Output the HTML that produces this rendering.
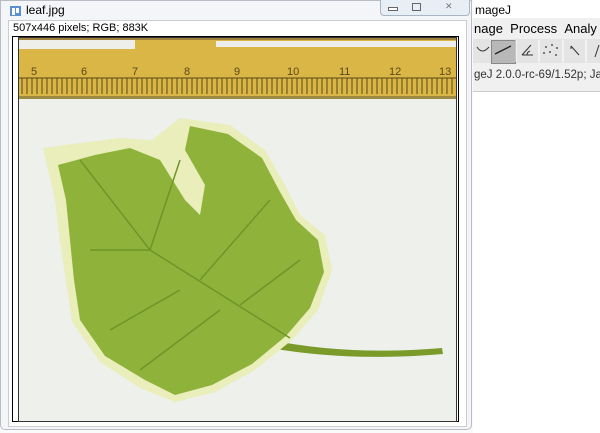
<!DOCTYPE html>
<html><head><style>
body{margin:0;width:600px;height:433px;overflow:hidden;background:#fafafa;font-family:"Liberation Sans",sans-serif;position:relative}
.a{position:absolute}
</style></head><body>
<div class="a" style="left:473px;top:0;width:127px;height:20px;background:#fff"></div>
<div class="a" style="left:475px;top:3px;font-size:12px;color:#000">mageJ</div>
<div class="a" style="left:473px;top:18px;width:127px;height:90px;background:#f0f0f0"></div>
<div class="a" style="left:474px;top:21px;font-size:13px;color:#000;white-space:nowrap">nage&nbsp;&nbsp;Process&nbsp;&nbsp;Analy</div>
<div class="a" style="left:473px;top:39px;width:127px;height:24px;background:#e4e4e4"></div>
<div class="a" style="left:491px;top:40px;width:23px;height:22px;background:#b8b8b8;border:1px solid #888"></div>
<svg class="a" style="left:473px;top:39px" width="127" height="24">
<path d="M4 8 q5 8 12 0" stroke="#333" fill="none"/>
<line x1="22" y1="15" x2="38" y2="7" stroke="#222" stroke-width="1.3"/>
<path d="M49 16 L60 16 M49 16 L58 6 M54 16 q0-3 3-4" stroke="#333" fill="none"/>
<g fill="#555"><circle cx="73" cy="8" r="1"/><circle cx="79" cy="6" r="1"/><circle cx="84" cy="9" r="1"/><circle cx="71" cy="14" r="1"/><circle cx="77" cy="13" r="1"/><circle cx="83" cy="16" r="1"/></g>
<path d="M98 7 L106 16 M98 7 L98 10" stroke="#333" fill="none"/>
<path d="M122 18 L126 6" stroke="#333" fill="none"/>
<line x1="43" y1="1" x2="43" y2="23" stroke="#fff"/><line x1="66" y1="1" x2="66" y2="23" stroke="#fff"/><line x1="90" y1="1" x2="90" y2="23" stroke="#fff"/><line x1="113" y1="1" x2="113" y2="23" stroke="#fff"/>
</svg>
<div class="a" style="left:474px;top:69px;font-size:11.5px;color:#333;white-space:nowrap">geJ 2.0.0-rc-69/1.52p; Jav</div>
<div class="a" style="left:473px;top:91px;width:127px;height:1px;background:#ccc"></div>
<div class="a" style="left:473px;top:92px;width:127px;height:341px;background:#fff"></div>
<div class="a" style="left:0;top:0;width:472px;height:430px;background:#f3f5f8;border:1px solid #b8bcc4;border-radius:0 0 5px 5px;box-sizing:border-box"></div>
<svg class="a" style="left:10px;top:5px" width="12" height="12"><rect x="0" y="1" width="11" height="10" fill="#5b8fd0"/><rect x="2" y="3" width="3" height="7" fill="#fff"/><rect x="6" y="3" width="3" height="5" fill="#fff"/></svg>
<div class="a" style="left:26px;top:3px;font-size:12px;color:#000">leaf.jpg</div>
<div class="a" style="left:380px;top:0;width:88px;height:15px;background:#e8eef6;border:1px solid #a8b4c4;border-top:none;border-radius:0 0 4px 4px"></div>
<div class="a" style="left:388px;top:7px;width:8px;height:2px;border:1px solid #666;background:#fff"></div>
<div class="a" style="left:412px;top:3px;width:7px;height:6px;border:1px solid #666"></div>
<div class="a" style="left:445px;top:1px;font-size:9px;color:#777">✕</div>
<div class="a" style="left:8px;top:20px;width:457px;height:405px;background:#fff;border:1px solid #ccc"></div>
<div class="a" style="left:13px;top:22px;font-size:11px;color:#000">507x446 pixels; RGB; 883K</div>
<div class="a" style="left:12px;top:36px;width:447px;height:386px;border:1px solid #000;box-sizing:border-box"></div>
<div class="a" style="left:18px;top:37px;width:439px;height:385px;background:#eef0ec;border:1px solid #333;box-sizing:border-box"></div>
<svg class="a" style="left:19px;top:38px" width="437" height="383">
<rect x="0" y="0" width="437" height="60" fill="#d9b646"/>
<rect x="0" y="0" width="437" height="2" fill="#a0803a"/>
<rect x="0" y="2" width="116" height="9" fill="#eeeeea"/>
<rect x="197" y="3" width="240" height="6" fill="#eeeeea"/>
<rect x="0" y="58" width="437" height="3" fill="#9c8a40"/>
<path stroke="#5a4818" d="M0 40 H437"/>
<g fill="#5a4818" font-size="11" font-family="Liberation Sans">
<text x="12" y="37">5</text><text x="62" y="37">6</text><text x="113" y="37">7</text><text x="165" y="37">8</text><text x="215" y="37">9</text><text x="268" y="37">10</text><text x="320" y="37">11</text><text x="370" y="37">12</text><text x="420" y="37">13</text>
</g>
<path stroke="#5a4818" stroke-width="1" d="M3 40v16M8 40v16M13 40v16M18 40v16M23 40v16M28 40v16M33 40v16M38 40v16M43 40v16M48 40v16M53 40v16M58 40v16M63 40v16M68 40v16M73 40v16M78 40v16M83 40v16M88 40v16M93 40v16M98 40v16M103 40v16M108 40v16M113 40v16M118 40v16M123 40v16M128 40v16M133 40v16M138 40v16M143 40v16M148 40v16M153 40v16M158 40v16M163 40v16M168 40v16M173 40v16M178 40v16M183 40v16M188 40v16M193 40v16M198 40v16M203 40v16M208 40v16M213 40v16M218 40v16M223 40v16M228 40v16M233 40v16M238 40v16M243 40v16M248 40v16M253 40v16M258 40v16M263 40v16M268 40v16M273 40v16M278 40v16M283 40v16M288 40v16M293 40v16M298 40v16M303 40v16M308 40v16M313 40v16M318 40v16M323 40v16M328 40v16M333 40v16M338 40v16M343 40v16M348 40v16M353 40v16M358 40v16M363 40v16M368 40v16M373 40v16M378 40v16M383 40v16M388 40v16M393 40v16M398 40v16M403 40v16M408 40v16M413 40v16M418 40v16M423 40v16M428 40v16M433 40v16"/>
<g transform="translate(-19,-38)">
<path d="M270 340 Q350 356 442 348 L443 354 Q350 362 270 348 Z" fill="#7a9a2a"/>
<path d="M180 118 L230 125 L265 150 L285 185 L300 215 L325 235 L332 270 L318 310 L292 340 L255 370 L215 392 L175 402 L140 388 L100 362 L72 322 L66 282 L60 242 L55 200 L43 148 L80 143 L120 138 L152 140 Z" fill="#e9eebb"/>
<path d="M190 126 L228 134 L262 158 L280 192 L296 220 L318 240 L324 272 L310 308 L286 336 L252 364 L212 385 L175 395 L145 380 L105 356 L80 320 L74 280 L70 240 L66 200 L58 165 L95 155 L130 148 L160 160 L185 200 L200 215 L205 185 L185 150 Z" fill="#8fb33a"/>
<path d="M290 338 L150 250 L80 160 M180 290 L110 330 M220 310 L140 370 M150 250 L90 250 M200 280 L270 200 M240 305 L300 260 M150 250 L180 160" stroke="#6f9428" stroke-width="1.5" fill="none"/>
</g>
</svg>
</body></html>
